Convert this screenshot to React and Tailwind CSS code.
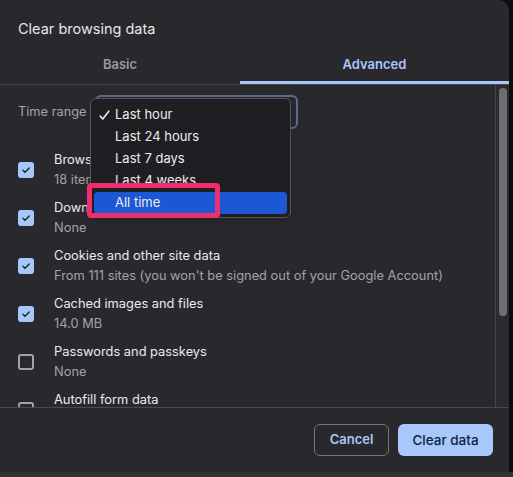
import React from "react";

const rows = [
  { title: "Browsing history", sub: "18 items", checked: true },
  { title: "Download history", sub: "None", checked: true },
  { title: "Cookies and other site data", sub: "From 111 sites (you won't be signed out of your Google Account)", checked: true },
  { title: "Cached images and files", sub: "14.0 MB", checked: true },
  { title: "Passwords and passkeys", sub: "None", checked: false },
  { title: "Autofill form data", sub: "None", checked: false },
];

const ranges = ["Last hour", "Last 24 hours", "Last 7 days", "Last 4 weeks", "All time"];

const Checkbox = ({ checked }) =>
  checked ? (
    <div className="w-[16px] h-[16px] rounded-[3px] bg-[#a8c7fa] flex items-center justify-center shrink-0">
      <svg width="12" height="12" viewBox="0 0 12 12">
        <path d="M3 6.3l2 2L9.2 4" fill="none" stroke="#1b1b1f" strokeWidth="1.3" strokeLinecap="round" strokeLinejoin="round" />
      </svg>
    </div>
  ) : (
    <div className="w-[16px] h-[16px] rounded-[3px] border-2 border-[#a3a2a8] shrink-0" />
  );

const App = () => {
  return (
    <div className="w-[513px] h-[477px] bg-[#0c0c0d] flex flex-col overflow-hidden" style={{ fontFamily: "Inter, 'Noto Sans', sans-serif" }}>
      <div className="flex">
        <div className="w-[509px] h-[472px] bg-[#29282d] rounded-tr-[10px] flex flex-col">
          <div className="h-[48px] pt-[19px] pl-[18px] text-[14.5px] leading-[20px] text-[#e6e5ea]">Clear browsing data</div>

          <div className="flex border-b border-[#46454b]">
            <div className="w-[240px] h-[36px] flex items-center justify-center border-b-[3px] border-transparent text-[13px] font-semibold text-[#99989d]">Basic</div>
            <div className="flex-1 h-[36px] flex items-center justify-center border-b-[3px] border-[#a8c7fa] text-[13px] font-semibold text-[#a8c7fa]">Advanced</div>
          </div>

          <div className="flex-1 flex border-b border-[#4a494f] overflow-hidden">
            <div className="flex-1 relative overflow-hidden">
              <div className="pl-[18px] pt-[10px] flex items-center">
                <div className="w-[77px] text-[12.8px] text-[#a6a5ab]">Time range</div>
                <div className="w-[203px] h-[34px] rounded-[6px] border-2 border-[#5d6b88]" />
              </div>

              <div className="mt-[17px]">
                {rows.map((r) => (
                  <div key={r.title} className="h-[48px] flex items-center pl-[18px] gap-[20px]">
                    <Checkbox checked={r.checked} />
                    <div className="text-[12.85px] leading-[20px]">
                      <div className="text-[#ebeaef]">{r.title}</div>
                      <div className="text-[#a3a2a8]">{r.sub}</div>
                    </div>
                  </div>
                ))}
              </div>

              <div className="absolute left-[90px] top-[13px] w-[201px] h-[120px] bg-[#1f1f23] border border-[#56555b] rounded-[6px] py-[5px] shadow-lg">
                {ranges.map((t, i) => (
                  <div
                    key={t}
                    className={
                      "h-[22px] mx-[3px] rounded-[4px] flex items-center text-[13px] text-[#ececf0] " +
                      (i === 4 ? "bg-[#1c58d3]" : "")
                    }
                  >
                    <span className="w-[21px] pl-[5px] flex items-center">
                      {i === 0 && (
                        <svg width="11" height="11" viewBox="0 0 11 11">
                          <path d="M1.2 6l2.6 3L9.8 1.2" fill="none" stroke="#ececf0" strokeWidth="1.6" strokeLinecap="round" strokeLinejoin="round" />
                        </svg>
                      )}
                    </span>
                    <span>{t}</span>
                  </div>
                ))}
              </div>

              <div className="absolute left-[87px] top-[98px] w-[133px] h-[35px] border-[5px] border-[#ef2f6c] rounded-[4px]" />
            </div>

            <div className="w-[14px] border-l border-[#47464c] bg-[#2b2a2f] pt-[3px] pl-[3px]">
              <div className="w-[8px] h-[228px] rounded-full bg-[#6e6d72]" />
            </div>
          </div>

          <div className="h-[64px] flex items-center justify-end gap-[9px] pr-[16px]">
            <button className="w-[75px] h-[32px] rounded-[6px] border border-[#75747a] text-[13px] font-semibold text-[#a8c7fa]">Cancel</button>
            <button className="w-[95px] h-[32px] rounded-[6px] bg-[#a8c7fa] text-[13.5px] font-medium text-[#0e1f3d]">Clear data</button>
          </div>
        </div>
        <div className="flex-1" />
      </div>
      <div className="flex-1 bg-[#323136]" />
    </div>
  );
};

export default App;
